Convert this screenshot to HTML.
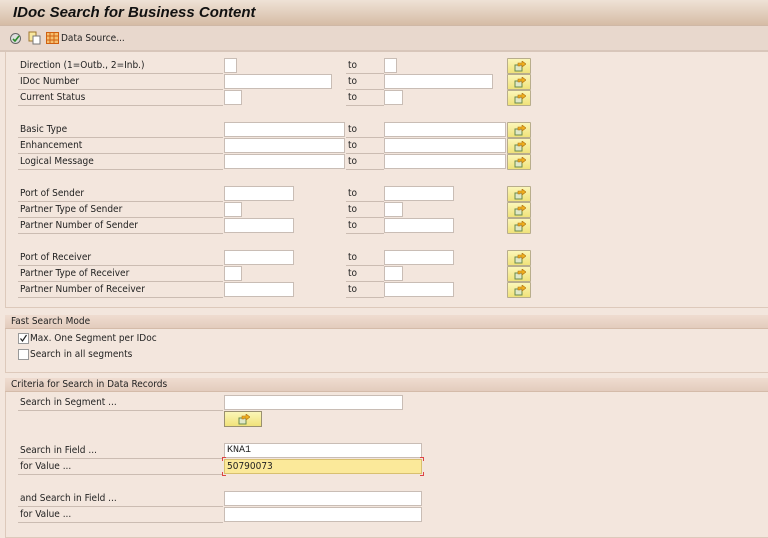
<!DOCTYPE html><html><head><style>
*{margin:0;padding:0;box-sizing:border-box}
body{width:768px;height:533px;background:#f3e6dd;font-family:"DejaVu Sans Condensed","Liberation Sans",sans-serif;font-size:10px;color:#222;position:relative;overflow:hidden}
.a{position:absolute}
.title{left:0;top:0;width:768px;height:26px;background:linear-gradient(#efe2d6,#d6bca5);border-bottom:1px solid #cfb8a6}
.title span{position:absolute;left:13px;top:4px;font:italic bold 15px "Liberation Sans",sans-serif;color:#111}
.tb{left:0;top:26px;width:768px;height:26px;background:#e8d8cd;border-bottom:2px solid #d8c6ba}
.lbl{position:absolute;left:18px;width:205px;height:16px;border-bottom:1px solid #cbbcb2;padding-left:2px;line-height:16px}
.to{position:absolute;left:346px;width:38px;height:16px;border-bottom:1px solid #cbbcb2;padding-left:2px;line-height:16px}
.in{position:absolute;height:15px;background:#fff;border:1px solid #c9bdb5}
.btn{position:absolute;left:507px;width:24px;height:16px;background:linear-gradient(#fbf6b8,#f0e27a);border:1px solid #b8ad8c;border-radius:1px}
.btn svg,.bb svg{position:absolute;left:6px;top:2px}
.sec{position:absolute;left:5px;width:763px;border:1px solid #ddc9bb;border-right:none}
.sh{position:absolute;left:5px;width:763px;height:14px;background:linear-gradient(#efdcd0,#e3ccbd);border-bottom:1px solid #d4bba9;padding-left:6px;line-height:14px}
.cb{position:absolute;left:18px;width:11px;height:11px;background:#fff;border:1px solid #999}
</style></head><body>
<div class="a title"><span>IDoc Search for Business Content</span></div>
<div class="a tb">
<svg class="a" style="left:9px;top:6px" width="13" height="13"><circle cx="6.5" cy="6.5" r="5" fill="#ddd" stroke="#666"/><path d="M4 7l2 2 4-5" stroke="#2a8a2a" stroke-width="1.6" fill="none"/></svg>
<svg class="a" style="left:28px;top:5px" width="13" height="14"><rect x="1" y="1" width="7" height="9" fill="#f8e8a0" stroke="#a07830"/><rect x="5" y="5" width="7" height="8" fill="#fff" stroke="#777"/></svg>
<svg class="a" style="left:46px;top:6px" width="13" height="12"><rect x="0.5" y="0.5" width="12" height="11" fill="#f6c070" stroke="#d06010"/><path d="M0 4h13M0 8h13M4 0v12M8 0v12" stroke="#d06010"/></svg>
<span class="a" style="left:61px;top:7px">Data Source...</span></div>
<div class="sec" style="top:52px;height:256px;border-top:none"></div>
<div class="lbl" style="top:58px">Direction (1=Outb., 2=Inb.)</div><div class="in" style="left:224px;top:58px;width:13px"></div><div class="to" style="top:58px">to</div><div class="in" style="left:384px;top:58px;width:13px"></div><div class="btn" style="top:58px"><svg width="12" height="11"><rect x="1" y="4" width="7" height="6" fill="#dfe8c8" stroke="#6a8a4a"/><path d="M4 5V2h4V0l4 3-4 3V4H6v1z" fill="#f0b020" stroke="#b07010" stroke-width=".6"/></svg></div>
<div class="lbl" style="top:74px">IDoc Number</div><div class="in" style="left:224px;top:74px;width:108px"></div><div class="to" style="top:74px">to</div><div class="in" style="left:384px;top:74px;width:109px"></div><div class="btn" style="top:74px"><svg width="12" height="11"><rect x="1" y="4" width="7" height="6" fill="#dfe8c8" stroke="#6a8a4a"/><path d="M4 5V2h4V0l4 3-4 3V4H6v1z" fill="#f0b020" stroke="#b07010" stroke-width=".6"/></svg></div>
<div class="lbl" style="top:90px">Current Status</div><div class="in" style="left:224px;top:90px;width:18px"></div><div class="to" style="top:90px">to</div><div class="in" style="left:384px;top:90px;width:19px"></div><div class="btn" style="top:90px"><svg width="12" height="11"><rect x="1" y="4" width="7" height="6" fill="#dfe8c8" stroke="#6a8a4a"/><path d="M4 5V2h4V0l4 3-4 3V4H6v1z" fill="#f0b020" stroke="#b07010" stroke-width=".6"/></svg></div>
<div class="lbl" style="top:122px">Basic Type</div><div class="in" style="left:224px;top:122px;width:121px"></div><div class="to" style="top:122px">to</div><div class="in" style="left:384px;top:122px;width:122px"></div><div class="btn" style="top:122px"><svg width="12" height="11"><rect x="1" y="4" width="7" height="6" fill="#dfe8c8" stroke="#6a8a4a"/><path d="M4 5V2h4V0l4 3-4 3V4H6v1z" fill="#f0b020" stroke="#b07010" stroke-width=".6"/></svg></div>
<div class="lbl" style="top:138px">Enhancement</div><div class="in" style="left:224px;top:138px;width:121px"></div><div class="to" style="top:138px">to</div><div class="in" style="left:384px;top:138px;width:122px"></div><div class="btn" style="top:138px"><svg width="12" height="11"><rect x="1" y="4" width="7" height="6" fill="#dfe8c8" stroke="#6a8a4a"/><path d="M4 5V2h4V0l4 3-4 3V4H6v1z" fill="#f0b020" stroke="#b07010" stroke-width=".6"/></svg></div>
<div class="lbl" style="top:154px">Logical Message</div><div class="in" style="left:224px;top:154px;width:121px"></div><div class="to" style="top:154px">to</div><div class="in" style="left:384px;top:154px;width:122px"></div><div class="btn" style="top:154px"><svg width="12" height="11"><rect x="1" y="4" width="7" height="6" fill="#dfe8c8" stroke="#6a8a4a"/><path d="M4 5V2h4V0l4 3-4 3V4H6v1z" fill="#f0b020" stroke="#b07010" stroke-width=".6"/></svg></div>
<div class="lbl" style="top:186px">Port of Sender</div><div class="in" style="left:224px;top:186px;width:70px"></div><div class="to" style="top:186px">to</div><div class="in" style="left:384px;top:186px;width:70px"></div><div class="btn" style="top:186px"><svg width="12" height="11"><rect x="1" y="4" width="7" height="6" fill="#dfe8c8" stroke="#6a8a4a"/><path d="M4 5V2h4V0l4 3-4 3V4H6v1z" fill="#f0b020" stroke="#b07010" stroke-width=".6"/></svg></div>
<div class="lbl" style="top:202px">Partner Type of Sender</div><div class="in" style="left:224px;top:202px;width:18px"></div><div class="to" style="top:202px">to</div><div class="in" style="left:384px;top:202px;width:19px"></div><div class="btn" style="top:202px"><svg width="12" height="11"><rect x="1" y="4" width="7" height="6" fill="#dfe8c8" stroke="#6a8a4a"/><path d="M4 5V2h4V0l4 3-4 3V4H6v1z" fill="#f0b020" stroke="#b07010" stroke-width=".6"/></svg></div>
<div class="lbl" style="top:218px">Partner Number of Sender</div><div class="in" style="left:224px;top:218px;width:70px"></div><div class="to" style="top:218px">to</div><div class="in" style="left:384px;top:218px;width:70px"></div><div class="btn" style="top:218px"><svg width="12" height="11"><rect x="1" y="4" width="7" height="6" fill="#dfe8c8" stroke="#6a8a4a"/><path d="M4 5V2h4V0l4 3-4 3V4H6v1z" fill="#f0b020" stroke="#b07010" stroke-width=".6"/></svg></div>
<div class="lbl" style="top:250px">Port of Receiver</div><div class="in" style="left:224px;top:250px;width:70px"></div><div class="to" style="top:250px">to</div><div class="in" style="left:384px;top:250px;width:70px"></div><div class="btn" style="top:250px"><svg width="12" height="11"><rect x="1" y="4" width="7" height="6" fill="#dfe8c8" stroke="#6a8a4a"/><path d="M4 5V2h4V0l4 3-4 3V4H6v1z" fill="#f0b020" stroke="#b07010" stroke-width=".6"/></svg></div>
<div class="lbl" style="top:266px">Partner Type of Receiver</div><div class="in" style="left:224px;top:266px;width:18px"></div><div class="to" style="top:266px">to</div><div class="in" style="left:384px;top:266px;width:19px"></div><div class="btn" style="top:266px"><svg width="12" height="11"><rect x="1" y="4" width="7" height="6" fill="#dfe8c8" stroke="#6a8a4a"/><path d="M4 5V2h4V0l4 3-4 3V4H6v1z" fill="#f0b020" stroke="#b07010" stroke-width=".6"/></svg></div>
<div class="lbl" style="top:282px">Partner Number of Receiver</div><div class="in" style="left:224px;top:282px;width:70px"></div><div class="to" style="top:282px">to</div><div class="in" style="left:384px;top:282px;width:70px"></div><div class="btn" style="top:282px"><svg width="12" height="11"><rect x="1" y="4" width="7" height="6" fill="#dfe8c8" stroke="#6a8a4a"/><path d="M4 5V2h4V0l4 3-4 3V4H6v1z" fill="#f0b020" stroke="#b07010" stroke-width=".6"/></svg></div>

<div class="sec" style="top:315px;height:58px"></div>
<div class="sh" style="top:315px">Fast Search Mode</div>
<div class="cb" style="top:333px"><svg width="9" height="9" style="position:absolute;left:0;top:0"><path d="M1.5 4.5l2 2.5 4-6" stroke="#222" stroke-width="1.2" fill="none"/></svg></div><span class="a" style="left:30px;top:333px">Max. One Segment per IDoc</span>
<div class="cb" style="top:349px"></div><span class="a" style="left:30px;top:349px">Search in all segments</span>

<div class="sec" style="top:378px;height:160px"></div>
<div class="sh" style="top:378px">Criteria for Search in Data Records</div>
<div class="lbl" style="top:395px">Search in Segment ...</div><div class="in" style="left:224px;top:395px;width:179px"></div>
<div class="bb a" style="left:224px;top:411px;width:38px;height:16px;background:linear-gradient(#fbf6b8,#f0e27a);border:1px solid #9a9070"><svg width="12" height="11" style="left:13px"><rect x="1" y="4" width="7" height="6" fill="#dfe8c8" stroke="#6a8a4a"/><path d="M4 5V2h4V0l4 3-4 3V4H6v1z" fill="#f0b020" stroke="#b07010" stroke-width=".6"/></svg></div>
<div class="lbl" style="top:443px">Search in Field ...</div><div class="in" style="left:224px;top:443px;width:198px;font-family:'Liberation Mono',monospace;padding-left:2px;line-height:13px">KNA1</div>
<div class="lbl" style="top:459px">for Value ...</div><div class="in" style="left:224px;top:459px;width:198px;background:#fbe99a;border:1px solid #d8c070;padding-left:2px;line-height:13px">50790073</div>
<div class="a" style="left:222px;top:457px;width:4px;height:4px;border-left:1px solid #d44;border-top:1px solid #d44"></div>
<div class="a" style="left:420px;top:457px;width:4px;height:4px;border-right:1px solid #d44;border-top:1px solid #d44"></div>
<div class="a" style="left:222px;top:472px;width:4px;height:4px;border-left:1px solid #d44;border-bottom:1px solid #d44"></div>
<div class="a" style="left:420px;top:472px;width:4px;height:4px;border-right:1px solid #d44;border-bottom:1px solid #d44"></div>
<div class="lbl" style="top:491px">and Search in Field ...</div><div class="in" style="left:224px;top:491px;width:198px"></div>
<div class="lbl" style="top:507px">for Value ...</div><div class="in" style="left:224px;top:507px;width:198px"></div>
</body></html>
